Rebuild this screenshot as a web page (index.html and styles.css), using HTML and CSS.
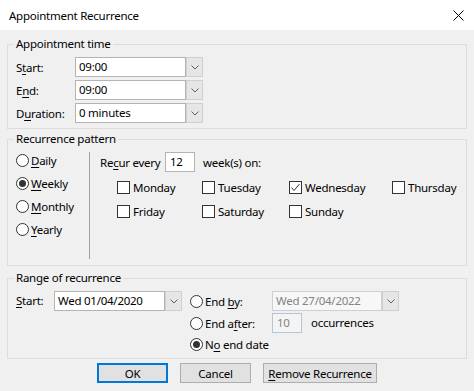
FILE: index.html
```html
<!DOCTYPE html>
<html lang="en">
<head>
  <meta charset="UTF-8" />
  <title>Appointment Recurrence</title>
  <link rel="stylesheet" href="styles.css">
</head>
<body>
  <div class="dialog">
    <!-- Title Bar -->
    <div class="titlebar">
      <span class="title">Appointment Recurrence</span>
      <svg class="close-icon" width="11" height="11" viewBox="0 0 11 11">
        <path d="M0.5 0.5 L10.5 10.5 M10.5 0.5 L0.5 10.5" stroke="#000" stroke-width="1" fill="none"/>
      </svg>
    </div>

    <div class="dialog-body">
      <!-- Appointment time -->
      <fieldset class="group">
        <legend>Appointment time</legend>
        <div class="time-rows">
          <div class="field-row">
            <span class="field-label">S<u>t</u>art:</span>
            <div class="combo">
              <span class="combo-value">09:00</span>
              <span class="combo-btn"><svg width="8" height="5" viewBox="0 0 8 5"><path d="M0.5 0.5 L4 4 L7.5 0.5" stroke="#606060" fill="none"/></svg></span>
            </div>
          </div>
          <div class="field-row">
            <span class="field-label">E<u>n</u>d:</span>
            <div class="combo">
              <span class="combo-value">09:00</span>
              <span class="combo-btn"><svg width="8" height="5" viewBox="0 0 8 5"><path d="M0.5 0.5 L4 4 L7.5 0.5" stroke="#606060" fill="none"/></svg></span>
            </div>
          </div>
          <div class="field-row">
            <span class="field-label">D<u>u</u>ration:</span>
            <div class="combo">
              <span class="combo-value">0 minutes</span>
              <span class="combo-btn"><svg width="8" height="5" viewBox="0 0 8 5"><path d="M0.5 0.5 L4 4 L7.5 0.5" stroke="#606060" fill="none"/></svg></span>
            </div>
          </div>
        </div>
      </fieldset>

      <!-- Recurrence pattern -->
      <fieldset class="group group-pattern">
        <legend>Recurrence pattern</legend>
        <div class="pattern">
          <div class="pattern-types">
            <div class="radio"><span class="radio-dot"></span><span><u>D</u>aily</span></div>
            <div class="radio"><span class="radio-dot checked"></span><span><u>W</u>eekly</span></div>
            <div class="radio"><span class="radio-dot"></span><span><u>M</u>onthly</span></div>
            <div class="radio"><span class="radio-dot"></span><span><u>Y</u>early</span></div>
          </div>
          <div class="pattern-detail">
            <div class="recur-row">
              <span class="recur-label">Re<u>c</u>ur every</span>
              <span class="textbox small">12</span>
              <span class="recur-unit">week(s) on:</span>
            </div>
            <div class="days">
              <div class="check"><span class="check-box"></span>Monday</div>
              <div class="check"><span class="check-box"></span>Tuesday</div>
              <div class="check"><span class="check-box"><svg width="11" height="11" viewBox="0 0 11 11"><path d="M1.5 5.5 L4 8.5 L9.5 2" stroke="#333" stroke-width="1" fill="none"/></svg></span>Wednesday</div>
              <div class="check"><span class="check-box"></span>Thursday</div>
              <div class="check"><span class="check-box"></span>Friday</div>
              <div class="check"><span class="check-box"></span>Saturday</div>
              <div class="check"><span class="check-box"></span>Sunday</div>
            </div>
          </div>
        </div>
      </fieldset>

      <!-- Range of recurrence -->
      <fieldset class="group group-range">
        <legend>Range of recurrence</legend>
        <div class="range">
          <span class="range-label"><u>S</u>tart:</span>
          <div class="combo">
            <span class="combo-value">Wed 01/04/2020</span>
            <span class="combo-btn"><svg width="8" height="5" viewBox="0 0 8 5"><path d="M0.5 0.5 L4 4 L7.5 0.5" stroke="#606060" fill="none"/></svg></span>
          </div>
          <div class="range-end">
            <div class="radio"><span class="radio-dot"></span><span>End <u>b</u>y:</span></div>
            <div class="combo disabled">
              <span class="combo-value">Wed 27/04/2022</span>
              <span class="combo-btn"><svg width="8" height="5" viewBox="0 0 8 5"><path d="M0.5 0.5 L4 4 L7.5 0.5" stroke="#606060" fill="none"/></svg></span>
            </div>
            <div class="radio"><span class="radio-dot"></span><span>End a<u>f</u>ter:</span></div>
            <div class="after-row">
              <span class="textbox small disabled">10</span>
              <span class="occurrences">occurrences</span>
            </div>
            <div class="radio no-end"><span class="radio-dot checked"></span><span>N<u>o</u> end date</span></div>
          </div>
        </div>
      </fieldset>

      <!-- Buttons -->
      <div class="buttons">
        <button class="btn btn-default">OK</button>
        <button class="btn">Cancel</button>
        <button class="btn btn-wide"><u>R</u>emove Recurrence</button>
      </div>
    </div>
  </div>
</body>
</html>
```

FILE: styles.css
```css
/* Global */
* {
  box-sizing: border-box;
}
html, body {
  margin: 0;
  padding: 0;
}
body {
  width: 474px;
  height: 391px;
  overflow: hidden;
  background: #f0f0f0;
  font-family: "Noto Sans", "Open Sans", sans-serif;
  font-size: 11.5px;
  letter-spacing: -0.25px;
  white-space: nowrap;
  color: #000;
}
u {
  text-decoration-thickness: 1px;
  text-underline-offset: 2px;
}

/* Title Bar */
.titlebar {
  height: 30px;
  background: #fff;
  display: flex;
  align-items: center;
  justify-content: space-between;
  padding: 0 10px 0 9px;
}

/* Body */
.dialog-body {
  padding: 6px 7px 0 7px;
}
.group {
  margin: 0;
  padding: 0 8px 5px;
  border: 1px solid #dcdcdc;
  min-width: 0;
}
.group legend {
  padding: 0 2px;
  margin-left: -2px;
  line-height: 16px;
}
.group-pattern {
  margin-top: 2px;
  padding-bottom: 6px;
}
.group-range {
  margin-top: 4px;
  padding-bottom: 6px;
}

/* Fields */
.time-rows {
  display: flex;
  flex-direction: column;
  gap: 3px;
  padding-top: 5px;
}
.field-row {
  display: flex;
  align-items: center;
  height: 20px;
}
.field-label {
  width: 59px;
}
.combo {
  display: flex;
  height: 20px;
}
.combo-value {
  width: 111px;
  height: 20px;
  line-height: 18px;
  padding-left: 3px;
  background: #fff;
  border: 1px solid #b4b4b4;
}
.combo-btn {
  width: 17px;
  height: 20px;
  background: #e6e6e6;
  border: 1px solid #cfcfcf;
  display: flex;
  align-items: center;
  justify-content: center;
}
.combo.disabled .combo-value {
  width: 110px;
  background: #f7f7f7;
  border-color: #cfcfcf;
  color: #838383;
}
.textbox {
  height: 20px;
  line-height: 18px;
  padding-left: 4px;
  background: #fff;
  border: 1px solid #b4b4b4;
}
.textbox.small {
  width: 30px;
}
.textbox.disabled {
  background: #f4f4f4;
  border-color: #b5c6db;
  color: #838383;
}

/* Radios and checks */
.radio {
  display: flex;
  align-items: center;
  gap: 2px;
  height: 16px;
}
.radio-dot {
  width: 13px;
  height: 13px;
  border: 1px solid #333;
  border-radius: 50%;
  background: #fff;
  display: flex;
  align-items: center;
  justify-content: center;
}
.radio-dot.checked::after {
  content: "";
  width: 7px;
  height: 7px;
  border-radius: 50%;
  background: #333;
}
.check {
  display: flex;
  align-items: center;
  gap: 3px;
  height: 16px;
}
.check-box {
  width: 13px;
  height: 13px;
  border: 1px solid #333;
  background: #fff;
  display: flex;
  align-items: center;
  justify-content: center;
}

/* Recurrence pattern */
.pattern {
  display: flex;
  height: 112px;
}
.pattern-types {
  width: 73px;
  display: flex;
  flex-direction: column;
  gap: 7px;
  padding-top: 5px;
}
.pattern-detail {
  border-left: 1px solid #a0a0a0;
  margin-top: 5px;
  padding-left: 10px;
  height: 107px;
}
.recur-row {
  display: flex;
  align-items: center;
  height: 20px;
}
.recur-label {
  width: 65px;
}
.recur-unit {
  margin-left: 8px;
}
.days {
  display: grid;
  grid-template-columns: 85px 87px 103px auto;
  row-gap: 8px;
  margin: 7px 0 0 17px;
}

/* Range of recurrence */
.range {
  display: flex;
  align-items: flex-start;
  padding-top: 5px;
}
.range-label {
  width: 38px;
  line-height: 20px;
}
.range-end {
  display: grid;
  grid-template-columns: 82px auto;
  row-gap: 2px;
  align-items: center;
  margin-left: 8px;
}
.range-end .radio {
  height: 20px;
}
.range-end .no-end {
  grid-column: 1 / 3;
  height: 16px;
  margin-top: 1px;
}
.after-row {
  display: flex;
  align-items: center;
}
.occurrences {
  margin-left: 9px;
  margin-top: -2px;
}

/* Buttons */
.buttons {
  display: flex;
  justify-content: center;
  gap: 12px;
  margin-top: 4px;
}
.btn {
  width: 71px;
  height: 20px;
  padding: 0;
  font-family: inherit;
  font-size: 11.5px;
  letter-spacing: -0.25px;
  color: #000;
  background: #e1e1e1;
  border: 1px solid #adadad;
}
.btn-default {
  border: 2px solid #0078d7;
}
.btn-wide {
  width: 114px;
}
```
